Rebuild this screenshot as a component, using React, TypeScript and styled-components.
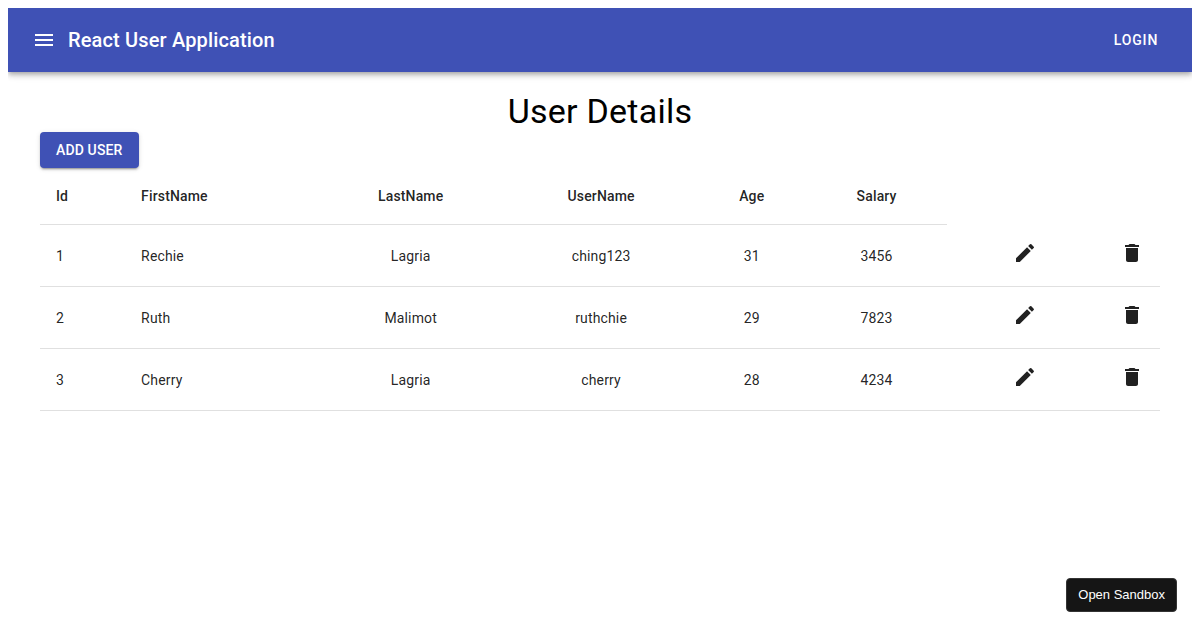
import React from "react";
import styled, { createGlobalStyle } from "styled-components";

const GlobalStyle = createGlobalStyle`
  body {
    margin: 8px;
    background: #fff;
    font-family: Roboto, "Liberation Sans", sans-serif;
  }
`;

const AppBar = styled.header`
  display: flex;
  align-items: center;
  height: 64px;
  padding: 0 24px 0 12px;
  background: #3f51b5;
  color: #fff;
  box-shadow: 0 2px 4px -1px rgba(0, 0, 0, 0.2), 0 4px 5px rgba(0, 0, 0, 0.14),
    0 1px 10px rgba(0, 0, 0, 0.12);
`;

const IconButton = styled.button`
  display: inline-flex;
  padding: 12px;
  border: 0;
  border-radius: 50%;
  background: transparent;
  color: inherit;
  vertical-align: middle;
  cursor: pointer;
`;

const Icon = styled.svg`
  display: block;
  width: 24px;
  height: 24px;
  fill: currentColor;
`;

const AppTitle = styled.h1`
  flex: 1;
  margin: 0;
  font-size: 20px;
  font-weight: 500;
  line-height: 32px;
  letter-spacing: 0.0075em;
`;

const Button = styled.button<{ $contained?: boolean }>`
  min-width: 64px;
  padding: 6px ${(p) => (p.$contained ? 16 : 8)}px;
  border: 0;
  border-radius: 4px;
  background: ${(p) => (p.$contained ? "#3f51b5" : "transparent")};
  color: #fff;
  font: 500 14px/24px Roboto, "Liberation Sans", sans-serif;
  letter-spacing: ${(p) => (p.$contained ? "0.01em" : "0.06em")};
  text-transform: uppercase;
  cursor: pointer;
  box-shadow: ${(p) =>
    p.$contained
      ? "0 3px 1px -2px rgba(0,0,0,.2), 0 2px 2px rgba(0,0,0,.14), 0 1px 5px rgba(0,0,0,.12)"
      : "none"};
`;

const Main = styled.main`
  padding: 18px 32px;
`;

const Heading = styled.h2`
  margin: 0;
  font-size: 34px;
  font-weight: 400;
  line-height: 42px;
  letter-spacing: 0.00735em;
  text-align: center;
`;

const Table = styled.table`
  width: 100%;
  border-collapse: separate;
  border-spacing: 0;
  color: rgba(0, 0, 0, 0.87);
  font-size: 14px;
  letter-spacing: 0.01071em;
`;

const Column = styled.col<{ $share: number }>`
  width: ${(p) => p.$share}%;
`;

const HeadCell = styled.th<{ $left?: boolean }>`
  padding: 16px;
  border-bottom: 1px solid #e0e0e0;
  font-weight: 500;
  line-height: 24px;
  text-align: ${(p) => (p.$left ? "left" : "center")};
`;

const Cell = styled.td<{ $left?: boolean }>`
  box-sizing: border-box;
  height: 62px;
  padding: 0 16px;
  border-bottom: 1px solid #e0e0e0;
  line-height: 20px;
  text-align: ${(p) => (p.$left ? "left" : "center")};
`;

const ActionCell = styled(Cell)`
  padding: 0 4px 6px;
  text-align: right;
`;

const SandboxButton = styled.button`
  position: fixed;
  right: 23px;
  bottom: 18px;
  height: 34px;
  padding: 0 11px;
  border: 1px solid #343434;
  border-radius: 4px;
  background: #151515;
  color: #fff;
  font: 400 13px/16px "Liberation Sans", sans-serif;
  cursor: pointer;
`;

const MENU = "M3 18h18v-2H3v2zm0-5h18v-2H3v2zm0-7v2h18V6H3z";
const EDIT =
  "M3 17.25V21h3.75L17.81 9.94l-3.75-3.75L3 17.25zM20.71 7.04c.39-.39.39-1.02 0-1.41l-2.34-2.34a.9959.9959 0 0 0-1.41 0l-1.83 1.83 3.75 3.75 1.83-1.83z";
const DELETE =
  "M6 19c0 1.1.9 2 2 2h8c1.1 0 2-.9 2-2V7H6v12zM19 4h-3.5l-1-1h-5l-1 1H5v2h14V4z";

const Glyph = ({ path }: { path: string }) => (
  <Icon viewBox="0 0 24 24" aria-hidden="true">
    <path d={path} />
  </Icon>
);

const columns = ["Id", "FirstName", "LastName", "UserName", "Age", "Salary"];
const shares = [7.6, 17.05, 16.9, 17.1, 9.8, 12.5, 9.5, 9.55];

const users = [
  { id: 1, first: "Rechie", last: "Lagria", user: "ching123", age: 31, salary: 3456 },
  { id: 2, first: "Ruth", last: "Malimot", user: "ruthchie", age: 29, salary: 7823 },
  { id: 3, first: "Cherry", last: "Lagria", user: "cherry", age: 28, salary: 4234 },
];

export default function App() {
  return (
    <>
      <GlobalStyle />
      <AppBar>
        <IconButton type="button" aria-label="Menu">
          <Glyph path={MENU} />
        </IconButton>
        <AppTitle>React User Application</AppTitle>
        <Button type="button">Login</Button>
      </AppBar>
      <Main>
        <Heading>User Details</Heading>
        <Button type="button" $contained>
          Add User
        </Button>
        <Table>
          <colgroup>
            {shares.map((share, i) => (
              <Column key={i} $share={share} />
            ))}
          </colgroup>
          <thead>
            <tr>
              {columns.map((name, i) => (
                <HeadCell key={name} scope="col" $left={i < 2}>
                  {name}
                </HeadCell>
              ))}
            </tr>
          </thead>
          <tbody>
            {users.map((u) => (
              <tr key={u.id}>
                <Cell $left>{u.id}</Cell>
                <Cell $left>{u.first}</Cell>
                <Cell>{u.last}</Cell>
                <Cell>{u.user}</Cell>
                <Cell>{u.age}</Cell>
                <Cell>{u.salary}</Cell>
                <ActionCell>
                  <IconButton type="button" aria-label={`Edit ${u.first}`}>
                    <Glyph path={EDIT} />
                  </IconButton>
                </ActionCell>
                <ActionCell>
                  <IconButton type="button" aria-label={`Delete ${u.first}`}>
                    <Glyph path={DELETE} />
                  </IconButton>
                </ActionCell>
              </tr>
            ))}
          </tbody>
        </Table>
      </Main>
      <SandboxButton type="button">Open Sandbox</SandboxButton>
    </>
  );
}
